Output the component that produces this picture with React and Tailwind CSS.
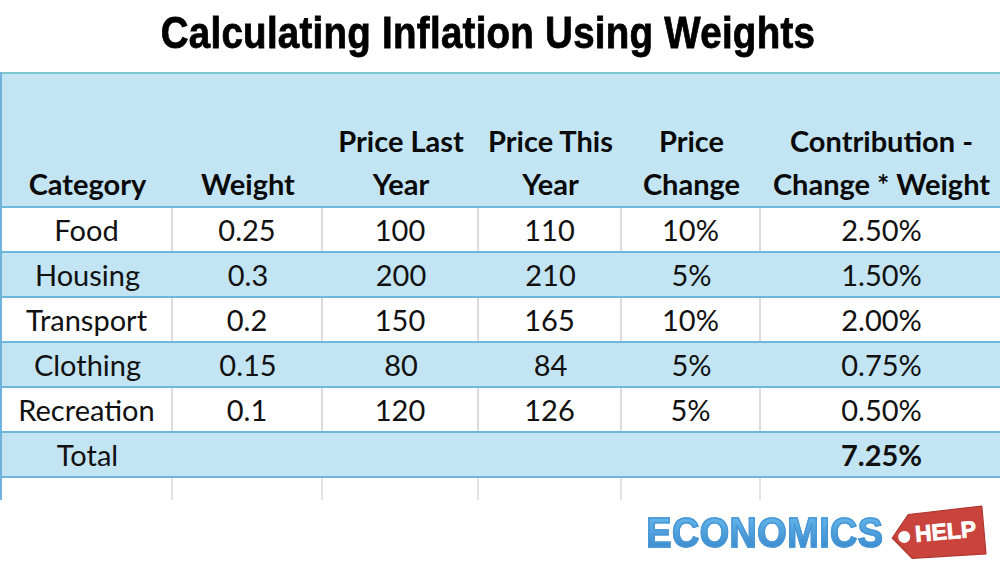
const rows = [
  ['Food', '0.25', '100', '110', '10%', '2.50%'],
  ['Housing', '0.3', '200', '210', '5%', '1.50%'],
  ['Transport', '0.2', '150', '165', '10%', '2.00%'],
  ['Clothing', '0.15', '80', '84', '5%', '0.75%'],
  ['Recreation', '0.1', '120', '126', '5%', '0.50%'],
];

const headLines = [
  [null, 'Category'],
  [null, 'Weight'],
  ['Price Last', 'Year'],
  ['Price This', 'Year'],
  ['Price', 'Change'],
  ['Contribution -', 'Change * Weight'],
];

const cols = 'grid grid-cols-[171px_150px_156px_143px_139px_241px]';

const Logo = () => (
  <div className="flex items-center gap-[6px]">
    <span
      className="text-[42px] font-bold tracking-[0.5px] leading-none scale-x-[0.9] origin-right bg-gradient-to-b from-[#6bbcee] to-[#3384c8] bg-clip-text text-transparent [-webkit-text-stroke:1.5px_#4897d6]"
      style={{ fontFamily: '"Liberation Sans", Arial, sans-serif' }}
    >
      ECONOMICS
    </span>
    <div className="relative w-[96px] h-[58px] -rotate-[5deg]">
      <svg viewBox="0 0 96 58" className="absolute inset-0 w-full h-full">
        <path d="M2 30 L20 8 L94 6 L94 54 L20 52 Z" fill="#c9443c" stroke="#b0362f" strokeWidth="1.2" strokeLinejoin="round" />
        <circle cx="14" cy="30" r="6" fill="#fff" />
      </svg>
      <span
        className="absolute left-[25px] top-[17px] text-white text-[23px] font-bold leading-none [-webkit-text-stroke:0.8px_#fff]"
        style={{ fontFamily: '"Liberation Sans", Arial, sans-serif' }}
      >
        HELP
      </span>
    </div>
  </div>
);

export default function App() {
  return (
    <div className="w-[1000px] h-[574px] bg-white overflow-hidden flex flex-col" style={{ fontFamily: 'Lato, "Open Sans", sans-serif' }}>
      <div className="h-[72px] flex justify-center pt-[7px]">
        <h1
          className="text-[44px] font-bold text-black leading-[52px] mr-[24px] tracking-[0.3px] scale-x-[0.875] [-webkit-text-stroke:0.8px_#000]"
          style={{ fontFamily: '"Liberation Sans", Arial, sans-serif' }}
        >
          Calculating Inflation Using Weights
        </h1>
      </div>

      <div className="border-l-2 border-[#6fb3dc] text-[#111]">
        <div className={`${cols} h-[136px] bg-[#c2e4f3] border-t-2 border-[#7cc6d0] border-b-2 border-b-[#6fb6dc]`}>
          {headLines.map(([a, b], i) => (
            <div key={i} className="flex flex-col justify-end items-center pb-[1px] text-[29px] font-bold leading-[43px] text-[#0a0a0a] whitespace-nowrap">
              {a && <span>{a}</span>}
              <span>{b}</span>
            </div>
          ))}
        </div>

        {rows.map((r, ri) => {
          const blue = ri % 2 === 1;
          return (
            <div key={ri} className={`${cols} h-[45px] border-b-2 border-[#6fb6dc] ${blue ? 'bg-[#c2e4f3]' : 'bg-white'}`}>
              {r.map((c, ci) => (
                <div
                  key={ci}
                  className={`flex items-center justify-center text-[29px] leading-none ${!blue && ci < 5 ? 'border-r-2 border-[#dcdcdc]' : ''}`}
                >
                  {c}
                </div>
              ))}
            </div>
          );
        })}

        <div className={`${cols} h-[45px] bg-[#c2e4f3] border-b-2 border-[#6fb6dc]`}>
          <div className="flex items-center justify-center text-[29px] leading-none">Total</div>
          <div />
          <div />
          <div />
          <div />
          <div className="flex items-center justify-center text-[29px] font-bold leading-none">7.25%</div>
        </div>

        <div className={`${cols} h-[22px] bg-white`}>
          {[0, 1, 2, 3, 4, 5].map((i) => (
            <div key={i} className={i < 5 ? 'border-r-2 border-[#e4e4e4]' : ''} />
          ))}
        </div>
      </div>

      <div className="flex justify-end pr-[14px] pt-[4px]">
        <Logo />
      </div>
    </div>
  );
}
